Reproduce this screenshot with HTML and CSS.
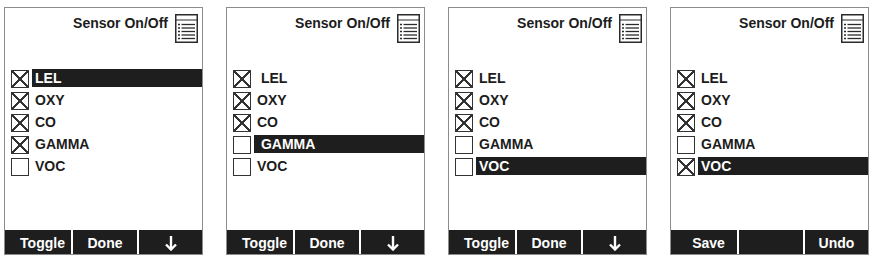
FILE: index.html
```html
<!DOCTYPE html>
<html>
<head>
<meta charset="utf-8">
<link rel="stylesheet" href="styles.css">
</head>
<body>
<div class="strip">

  <div class="screen">
    <div class="header">
      <span class="title">Sensor On/Off</span>
      <svg class="listicon" width="23" height="29" viewBox="0 0 23 29"><rect x="0.75" y="0.75" width="21.5" height="27.5" fill="#fff" stroke="#2a2a2a" stroke-width="1.5"/><line x1="1" y1="6" x2="22" y2="6" stroke="#2a2a2a" stroke-width="1"/><g stroke="#2a2a2a" stroke-width="1.3"><line x1="3" y1="10.5" x2="5" y2="10.5"/><line x1="6.5" y1="10.5" x2="20" y2="10.5"/><line x1="3" y1="14" x2="5" y2="14"/><line x1="6.5" y1="14" x2="20" y2="14"/><line x1="3" y1="17.5" x2="5" y2="17.5"/><line x1="6.5" y1="17.5" x2="20" y2="17.5"/><line x1="3" y1="21" x2="5" y2="21"/><line x1="6.5" y1="21" x2="20" y2="21"/><line x1="3" y1="24.5" x2="5" y2="24.5"/><line x1="6.5" y1="24.5" x2="20" y2="24.5"/></g></svg>
    </div>
    <div class="list">
      <div class="row"><span class="box checked"></span><span class="label selected">LEL</span></div>
      <div class="row"><span class="box checked"></span><span class="label">OXY</span></div>
      <div class="row"><span class="box checked"></span><span class="label">CO</span></div>
      <div class="row"><span class="box checked"></span><span class="label">GAMMA</span></div>
      <div class="row"><span class="box"></span><span class="label">VOC</span></div>
    </div>
    <div class="footer">
      <span class="key first">Toggle</span>
      <span class="key">Done</span>
      <span class="key"><svg width="12" height="15" viewBox="0 0 12 15"><g fill="none" stroke="#fff" stroke-width="2.4"><line x1="6" y1="0" x2="6" y2="13.5"/><polyline points="1,8.5 6,13.5 11,8.5"/></g></svg></span>
    </div>
  </div>

  <div class="screen">
    <div class="header">
      <span class="title">Sensor On/Off</span>
      <svg class="listicon" width="23" height="29" viewBox="0 0 23 29"><rect x="0.75" y="0.75" width="21.5" height="27.5" fill="#fff" stroke="#2a2a2a" stroke-width="1.5"/><line x1="1" y1="6" x2="22" y2="6" stroke="#2a2a2a" stroke-width="1"/><g stroke="#2a2a2a" stroke-width="1.3"><line x1="3" y1="10.5" x2="5" y2="10.5"/><line x1="6.5" y1="10.5" x2="20" y2="10.5"/><line x1="3" y1="14" x2="5" y2="14"/><line x1="6.5" y1="14" x2="20" y2="14"/><line x1="3" y1="17.5" x2="5" y2="17.5"/><line x1="6.5" y1="17.5" x2="20" y2="17.5"/><line x1="3" y1="21" x2="5" y2="21"/><line x1="6.5" y1="21" x2="20" y2="21"/><line x1="3" y1="24.5" x2="5" y2="24.5"/><line x1="6.5" y1="24.5" x2="20" y2="24.5"/></g></svg>
    </div>
    <div class="list">
      <div class="row"><span class="box checked"></span><span class="label">&nbsp;LEL</span></div>
      <div class="row"><span class="box checked"></span><span class="label">OXY</span></div>
      <div class="row"><span class="box checked"></span><span class="label">CO</span></div>
      <div class="row"><span class="box"></span><span class="label selected">&nbsp;GAMMA</span></div>
      <div class="row"><span class="box"></span><span class="label">VOC</span></div>
    </div>
    <div class="footer">
      <span class="key first">Toggle</span>
      <span class="key">Done</span>
      <span class="key"><svg width="12" height="15" viewBox="0 0 12 15"><g fill="none" stroke="#fff" stroke-width="2.4"><line x1="6" y1="0" x2="6" y2="13.5"/><polyline points="1,8.5 6,13.5 11,8.5"/></g></svg></span>
    </div>
  </div>

  <div class="screen">
    <div class="header">
      <span class="title">Sensor On/Off</span>
      <svg class="listicon" width="23" height="29" viewBox="0 0 23 29"><rect x="0.75" y="0.75" width="21.5" height="27.5" fill="#fff" stroke="#2a2a2a" stroke-width="1.5"/><line x1="1" y1="6" x2="22" y2="6" stroke="#2a2a2a" stroke-width="1"/><g stroke="#2a2a2a" stroke-width="1.3"><line x1="3" y1="10.5" x2="5" y2="10.5"/><line x1="6.5" y1="10.5" x2="20" y2="10.5"/><line x1="3" y1="14" x2="5" y2="14"/><line x1="6.5" y1="14" x2="20" y2="14"/><line x1="3" y1="17.5" x2="5" y2="17.5"/><line x1="6.5" y1="17.5" x2="20" y2="17.5"/><line x1="3" y1="21" x2="5" y2="21"/><line x1="6.5" y1="21" x2="20" y2="21"/><line x1="3" y1="24.5" x2="5" y2="24.5"/><line x1="6.5" y1="24.5" x2="20" y2="24.5"/></g></svg>
    </div>
    <div class="list">
      <div class="row"><span class="box checked"></span><span class="label">LEL</span></div>
      <div class="row"><span class="box checked"></span><span class="label">OXY</span></div>
      <div class="row"><span class="box checked"></span><span class="label">CO</span></div>
      <div class="row"><span class="box"></span><span class="label">GAMMA</span></div>
      <div class="row"><span class="box"></span><span class="label selected">VOC</span></div>
    </div>
    <div class="footer">
      <span class="key first">Toggle</span>
      <span class="key">Done</span>
      <span class="key"><svg width="12" height="15" viewBox="0 0 12 15"><g fill="none" stroke="#fff" stroke-width="2.4"><line x1="6" y1="0" x2="6" y2="13.5"/><polyline points="1,8.5 6,13.5 11,8.5"/></g></svg></span>
    </div>
  </div>

  <div class="screen">
    <div class="header">
      <span class="title">Sensor On/Off</span>
      <svg class="listicon" width="23" height="29" viewBox="0 0 23 29"><rect x="0.75" y="0.75" width="21.5" height="27.5" fill="#fff" stroke="#2a2a2a" stroke-width="1.5"/><line x1="1" y1="6" x2="22" y2="6" stroke="#2a2a2a" stroke-width="1"/><g stroke="#2a2a2a" stroke-width="1.3"><line x1="3" y1="10.5" x2="5" y2="10.5"/><line x1="6.5" y1="10.5" x2="20" y2="10.5"/><line x1="3" y1="14" x2="5" y2="14"/><line x1="6.5" y1="14" x2="20" y2="14"/><line x1="3" y1="17.5" x2="5" y2="17.5"/><line x1="6.5" y1="17.5" x2="20" y2="17.5"/><line x1="3" y1="21" x2="5" y2="21"/><line x1="6.5" y1="21" x2="20" y2="21"/><line x1="3" y1="24.5" x2="5" y2="24.5"/><line x1="6.5" y1="24.5" x2="20" y2="24.5"/></g></svg>
    </div>
    <div class="list">
      <div class="row"><span class="box checked"></span><span class="label">LEL</span></div>
      <div class="row"><span class="box checked"></span><span class="label">OXY</span></div>
      <div class="row"><span class="box checked"></span><span class="label">CO</span></div>
      <div class="row"><span class="box"></span><span class="label">GAMMA</span></div>
      <div class="row"><span class="box checked"></span><span class="label selected">VOC</span></div>
    </div>
    <div class="footer">
      <span class="key first">Save</span>
      <span class="key"></span>
      <span class="key">Undo</span>
    </div>
  </div>

</div>
</body>
</html>
```

FILE: styles.css
```css
html, body {
  margin: 0;
  padding: 0;
  background: #fff;
}

body {
  font-family: "Liberation Sans", Arial, sans-serif;
  font-weight: bold;
  color: #1c1c1c;
}

.strip {
  display: flex;
  gap: 23px;
  padding: 7px 0 0 4px;
}

.screen {
  box-sizing: border-box;
  width: 199px;
  height: 248px;
  border: 1px solid #8c8c8c;
  display: flex;
  flex-direction: column;
}

.header {
  height: 61px;
  display: flex;
  justify-content: flex-end;
  align-items: flex-start;
  gap: 7px;
  padding: 6px 4px 0 0;
  box-sizing: border-box;
}

.title {
  font-size: 14px;
  line-height: 16px;
  margin-top: 1px;
}

.listicon {
  display: block;
}

.list {
  display: flex;
  flex-direction: column;
  gap: 4px;
}

.row {
  display: flex;
  align-items: center;
  height: 18px;
  padding-left: 6px;
}

.box {
  box-sizing: border-box;
  width: 18px;
  height: 18px;
  margin-top: 1px;
  border: 1.5px solid #333;
  margin-right: 3px;
  flex: none;
}

.box.checked {
  background:
    linear-gradient(to top right, transparent calc(50% - 0.8px), #333 calc(50% - 0.8px), #333 calc(50% + 0.8px), transparent calc(50% + 0.8px)),
    linear-gradient(to bottom right, transparent calc(50% - 0.8px), #333 calc(50% - 0.8px), #333 calc(50% + 0.8px), transparent calc(50% + 0.8px));
}

.label {
  flex: 1;
  height: 18px;
  line-height: 18px;
  font-size: 14px;
  padding-left: 3px;
  white-space: pre;
}

.label.selected {
  background: #1e1e1e;
  color: #fff;
}

.footer {
  margin-top: auto;
  height: 24px;
  display: grid;
  grid-template-columns: 66px 64px 1fr;
  gap: 2px;
}

.key {
  background: #1e1e1e;
  color: #fff;
  font-size: 14px;
  display: flex;
  align-items: center;
  justify-content: center;
  padding-top: 2px;
  box-sizing: border-box;
}

.key.first {
  padding-left: 9px;
}

.key svg {
  display: block;
  margin-top: 1px;
}
```
